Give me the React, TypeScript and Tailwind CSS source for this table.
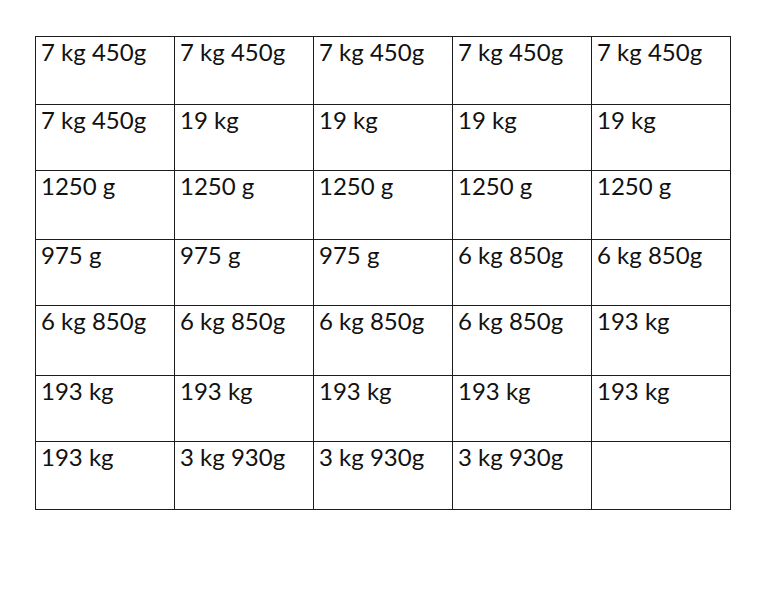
import React from "react";

const rows: string[][] = [
  ["7 kg 450g", "7 kg 450g", "7 kg 450g", "7 kg 450g", "7 kg 450g"],
  ["7 kg 450g", "19 kg", "19 kg", "19 kg", "19 kg"],
  ["1250 g", "1250 g", "1250 g", "1250 g", "1250 g"],
  ["975 g", "975 g", "975 g", "6 kg 850g", "6 kg 850g"],
  ["6 kg 850g", "6 kg 850g", "6 kg 850g", "6 kg 850g", "193 kg"],
  ["193 kg", "193 kg", "193 kg", "193 kg", "193 kg"],
  ["193 kg", "3 kg 930g", "3 kg 930g", "3 kg 930g", ""],
];

const heights = [68, 66, 69, 66, 70, 66, 68];

export default function App() {
  return (
    <div className="w-[768px] h-[594px] bg-white pt-[36px] pl-[35px]" style={{ fontFamily: "Lato, 'Open Sans', sans-serif" }}>
      <table className="border-collapse table-fixed w-[695px]">
        <colgroup>
          <col className="w-[139px]" />
          <col className="w-[139px]" />
          <col className="w-[139px]" />
          <col className="w-[139px]" />
          <col className="w-[139px]" />
        </colgroup>
        <tbody>
          {rows.map((r, i) => (
            <tr key={i} style={{ height: heights[i] }}>
              {r.map((c, j) => (
                <td
                  key={j}
                  className="border border-[#1c1c1c] align-top pl-[5px] pt-[1px] text-[24px] leading-[1.2] text-[#111] whitespace-nowrap p-0"
                >
                  {c}
                </td>
              ))}
            </tr>
          ))}
        </tbody>
      </table>
    </div>
  );
}
